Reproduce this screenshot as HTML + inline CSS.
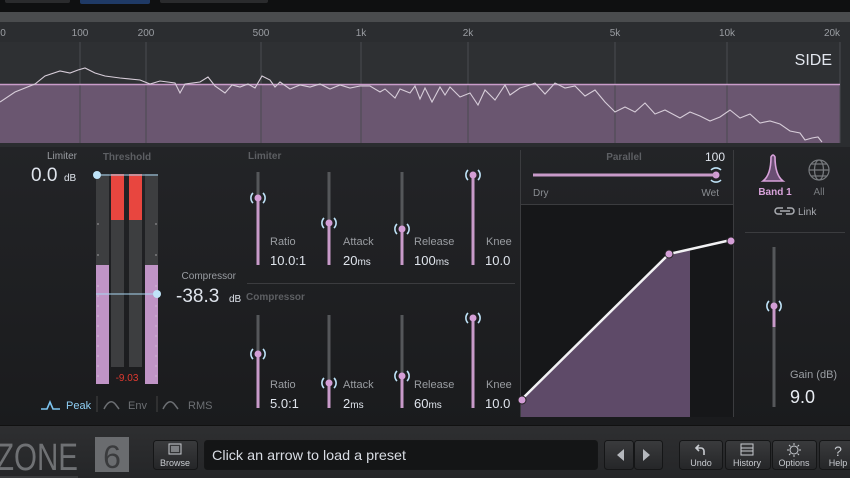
<!DOCTYPE html>
<html><head><meta charset="utf-8"><style>
body{margin:0;width:850px;height:478px;overflow:hidden;background:#1c1d1f;font-family:"Liberation Sans",sans-serif}
svg{display:block}
</style></head><body>
<svg width="850" height="478" viewBox="0 0 850 478" xmlns="http://www.w3.org/2000/svg" font-family="Liberation Sans, sans-serif">
<defs>
<linearGradient id="bg" x1="0" y1="0" x2="0" y2="1"><stop offset="0" stop-color="#232427"/><stop offset="1" stop-color="#1a1b1d"/></linearGradient>
<linearGradient id="ft" x1="0" y1="0" x2="0" y2="1"><stop offset="0" stop-color="#2e2f31"/><stop offset="1" stop-color="#252628"/></linearGradient>
<linearGradient id="btn" x1="0" y1="0" x2="0" y2="1"><stop offset="0" stop-color="#3a3b3d"/><stop offset="1" stop-color="#252628"/></linearGradient>
</defs>
<rect x="0" y="0" width="850" height="12" fill="#0f1011"/>
<rect x="5" y="-4" width="65" height="7" rx="2" fill="#2a2b2d"/>
<rect x="80" y="-4" width="70" height="8" rx="2" fill="#1f3a66"/>
<rect x="160" y="-4" width="108" height="7" rx="2" fill="#2a2b2d"/>
<rect x="0" y="12" width="850" height="10" fill="#4a4c4e"/>
<rect x="0" y="22" width="850" height="125" fill="#2b2d30"/>
<rect x="0" y="42" width="840" height="101" fill="#2e3033"/>
<g fill="#9a9da2" font-size="10" text-anchor="middle">
<text x="3" y="36">0</text><text x="80" y="36">100</text><text x="146" y="36">200</text><text x="261" y="36">500</text><text x="361" y="36">1k</text><text x="468" y="36">2k</text><text x="615" y="36">5k</text><text x="727" y="36">10k</text><text x="832" y="36">20k</text>
</g>
<rect x="0" y="84" width="840" height="59" fill="#6a5670"/>
<g stroke="#4a4b50" stroke-width="1"><line x1="80" y1="42" x2="80" y2="143"/><line x1="146" y1="42" x2="146" y2="143"/><line x1="261" y1="42" x2="261" y2="143"/><line x1="361" y1="42" x2="361" y2="143"/><line x1="468" y1="42" x2="468" y2="143"/><line x1="615" y1="42" x2="615" y2="143"/><line x1="727" y1="42" x2="727" y2="143"/><line x1="840" y1="42" x2="840" y2="143"/></g>
<line x1="0" y1="84.5" x2="840" y2="84.5" stroke="#c99cca" stroke-width="1.5"/>
<path d="M0,102 L15,92 L35,84 L45,76 L60,71 L70,73 L78,70 L85,68 L95,73 L105,76 L120,78 L140,80 L150,84 L160,81 L175,83 L180,93 L185,84 L200,82 L208,77 L215,86 L225,93 L232,85 L240,87 L248,84 L255,88 L262,76 L270,80 L275,87 L280,82 L290,89 L300,85 L310,87 L320,84 L330,89 L340,85 L350,88 L360,86 L370,86 L380,92 L385,89 L395,98 L400,89 L410,93 L415,86 L420,99 L425,88 L432,102 L440,87 L445,95 L450,87 L460,97 L470,93 L478,105 L485,90 L495,100 L505,85 L510,95 L520,88 L530,85 L535,83 L545,94 L555,83 L565,88 L575,86 L585,96 L595,90 L605,102 L615,112 L625,107 L635,112 L645,103 L655,114 L665,110 L680,118 L690,112 L700,116 L710,121 L720,117 L730,110 L740,118 L750,114 L760,123 L770,121 L780,124 L790,131 L800,133 L805,140 L812,138 L818,137 L822,142" fill="none" stroke="#d7cdd9" stroke-width="1.1"/>
<text x="832" y="65" font-size="16" fill="#e2e6ee" text-anchor="end">SIDE</text>
<rect x="0" y="147" width="850" height="278" fill="url(#bg)"/>
<text x="77" y="159" font-size="10" fill="#9a9da2" text-anchor="end">Limiter</text>
<text x="31" y="181" font-size="19" fill="#dfe4ec">0.0</text><text x="64" y="181" font-size="10" fill="#dfe4ec">dB</text>
<text x="127" y="160" font-size="10" fill="#5d5f63" font-weight="bold" text-anchor="middle">Threshold</text>
<rect x="96" y="174" width="13" height="210" fill="#3d3e40"/><rect x="145" y="174" width="13" height="210" fill="#3d3e40"/>
<rect x="111" y="174" width="13" height="193" fill="#3d3e40"/><rect x="129" y="174" width="13" height="193" fill="#3d3e40"/>
<rect x="111" y="174" width="13" height="46" fill="#e8463f"/><rect x="129" y="174" width="13" height="46" fill="#e8463f"/>
<rect x="96" y="265" width="13" height="119" fill="#c094c6"/><rect x="145" y="265" width="13" height="119" fill="#c094c6"/>
<g stroke="#d8d8dc" stroke-width="1" opacity="0.6">
<path d="M97,224h2M97,255h2M97,286h2M97,296h2M97,306h2M97,316h2M97,326h2M97,336h2M97,346h2M97,356h2M97,366h2M97,376h2"/>
<path d="M155,224h2M155,255h2M155,286h2M155,296h2M155,306h2M155,316h2M155,326h2M155,336h2M155,346h2M155,356h2M155,366h2M155,376h2"/>
</g>
<text x="127" y="381" font-size="10" fill="#e03a30" text-anchor="middle">-9.03</text>
<line x1="96" y1="175" x2="158" y2="175" stroke="#a9d6f2"/><circle cx="97" cy="175" r="4" fill="#bfe3f8"/>
<line x1="96" y1="294" x2="158" y2="294" stroke="#a9d6f2"/><circle cx="157" cy="294" r="4" fill="#bfe3f8"/>
<text x="236" y="279" font-size="10" fill="#9a9da2" text-anchor="end">Compressor</text>
<text x="176" y="302" font-size="19" fill="#dfe4ec">-38.3</text><text x="229" y="302" font-size="10" fill="#dfe4ec">dB</text>
<path d="M41,409 h6 l3,-7 l3,7 h7" fill="none" stroke="#7cc4f0" stroke-width="1.6"/><text x="66" y="409" font-size="11" fill="#8fd0f6">Peak</text>
<line x1="97" y1="396" x2="97" y2="412" stroke="#444"/>
<path d="M104,409 q6,-12 12,-4 l3,4" fill="none" stroke="#6c6f73" stroke-width="1.5"/><text x="128" y="409" font-size="11" fill="#6c6f73">Env</text>
<line x1="157" y1="396" x2="157" y2="412" stroke="#444"/>
<path d="M163,409 q6,-12 12,-4 l3,4" fill="none" stroke="#6c6f73" stroke-width="1.5"/><text x="188" y="409" font-size="11" fill="#6c6f73">RMS</text>
<text x="248" y="159" font-size="10" fill="#5d5f63" font-weight="bold">Limiter</text>
<line x1="247" y1="283.5" x2="515" y2="283.5" stroke="#3b3c3f"/>
<text x="246" y="300" font-size="10" fill="#5d5f63" font-weight="bold">Compressor</text>
<g stroke-width="3">
<line x1="258" y1="172" x2="258" y2="265" stroke="#55575a"/><line x1="258" y1="198" x2="258" y2="265" stroke="#c89ac9"/>
<line x1="329" y1="172" x2="329" y2="265" stroke="#55575a"/><line x1="329" y1="223" x2="329" y2="265" stroke="#c89ac9"/>
<line x1="402" y1="172" x2="402" y2="265" stroke="#55575a"/><line x1="402" y1="229" x2="402" y2="265" stroke="#c89ac9"/>
<line x1="473" y1="175" x2="473" y2="265" stroke="#c89ac9"/>
<line x1="258" y1="315" x2="258" y2="408" stroke="#55575a"/><line x1="258" y1="354" x2="258" y2="408" stroke="#c89ac9"/>
<line x1="329" y1="315" x2="329" y2="408" stroke="#55575a"/><line x1="329" y1="383" x2="329" y2="408" stroke="#c89ac9"/>
<line x1="402" y1="315" x2="402" y2="408" stroke="#55575a"/><line x1="402" y1="376" x2="402" y2="408" stroke="#c89ac9"/>
<line x1="473" y1="318" x2="473" y2="408" stroke="#c89ac9"/>
<line x1="774" y1="247" x2="774" y2="407" stroke="#55575a"/><line x1="774" y1="306" x2="774" y2="327" stroke="#c89ac9"/>
</g>
<g fill="#d39ed6" stroke="#bfe3f8" stroke-width="1.6">
<g transform="translate(258,198)"><circle r="3.5" stroke="none"/><path d="M-5,-5 a7,7 0 0 0 0,10 M5,-5 a7,7 0 0 1 0,10" fill="none"/></g>
<g transform="translate(329,223)"><circle r="3.5" stroke="none"/><path d="M-5,-5 a7,7 0 0 0 0,10 M5,-5 a7,7 0 0 1 0,10" fill="none"/></g>
<g transform="translate(402,229)"><circle r="3.5" stroke="none"/><path d="M-5,-5 a7,7 0 0 0 0,10 M5,-5 a7,7 0 0 1 0,10" fill="none"/></g>
<g transform="translate(473,175)"><circle r="3.5" stroke="none"/><path d="M-5,-5 a7,7 0 0 0 0,10 M5,-5 a7,7 0 0 1 0,10" fill="none"/></g>
<g transform="translate(258,354)"><circle r="3.5" stroke="none"/><path d="M-5,-5 a7,7 0 0 0 0,10 M5,-5 a7,7 0 0 1 0,10" fill="none"/></g>
<g transform="translate(329,383)"><circle r="3.5" stroke="none"/><path d="M-5,-5 a7,7 0 0 0 0,10 M5,-5 a7,7 0 0 1 0,10" fill="none"/></g>
<g transform="translate(402,376)"><circle r="3.5" stroke="none"/><path d="M-5,-5 a7,7 0 0 0 0,10 M5,-5 a7,7 0 0 1 0,10" fill="none"/></g>
<g transform="translate(473,318)"><circle r="3.5" stroke="none"/><path d="M-5,-5 a7,7 0 0 0 0,10 M5,-5 a7,7 0 0 1 0,10" fill="none"/></g>
<g transform="translate(774,306)"><circle r="3.5" stroke="none"/><path d="M-5,-5 a7,7 0 0 0 0,10 M5,-5 a7,7 0 0 1 0,10" fill="none"/></g>
<g transform="translate(716,175)"><circle r="3.5" stroke="none"/><path d="M-5,-5 a7,7 0 0 1 10,0 M-5,5 a7,7 0 0 0 10,0" fill="none"/></g>
</g>
<g font-size="11" fill="#9a9da2">
<text x="270" y="245">Ratio</text><text x="343" y="245">Attack</text><text x="414" y="245">Release</text><text x="486" y="245">Knee</text>
<text x="270" y="388">Ratio</text><text x="343" y="388">Attack</text><text x="414" y="388">Release</text><text x="486" y="388">Knee</text>
</g>
<g font-size="13" fill="#dfe4ec">
<text x="270" y="265">10.0:1</text><text x="343" y="265">20<tspan font-size="10">ms</tspan></text><text x="414" y="265">100<tspan font-size="10">ms</tspan></text><text x="485" y="265">10.0</text>
<text x="270" y="408">5.0:1</text><text x="343" y="408">2<tspan font-size="10">ms</tspan></text><text x="414" y="408">60<tspan font-size="10">ms</tspan></text><text x="485" y="408">10.0</text>
</g>
<line x1="520.5" y1="150" x2="520.5" y2="417" stroke="#3b3c3f"/>
<line x1="733.5" y1="150" x2="733.5" y2="417" stroke="#3b3c3f"/>
<text x="624" y="160" font-size="10" fill="#5d5f63" font-weight="bold" text-anchor="middle">Parallel</text>
<text x="725" y="161" font-size="12" fill="#dfe4ec" text-anchor="end">100</text>
<line x1="533" y1="175" x2="716" y2="175" stroke="#c89ac9" stroke-width="3"/>
<text x="533" y="196" font-size="10" fill="#8a8d92">Dry</text><text x="719" y="196" font-size="10" fill="#8a8d92" text-anchor="end">Wet</text>
<line x1="520" y1="204.5" x2="733" y2="204.5" stroke="#3b3c3f"/>
<rect x="521" y="205" width="212" height="212" fill="#161719"/>
<polygon points="521,400 669,254 690,249 690,417 521,417" fill="#5e4a68"/>
<polyline points="521,400 669,254 731,240" fill="none" stroke="#f2f2f4" stroke-width="2.5"/>
<g fill="#d39ed6" stroke="#222" stroke-width="1"><circle cx="522" cy="400" r="4"/><circle cx="669" cy="254" r="4"/><circle cx="731" cy="241" r="4"/></g>
<path d="M763,181 q8,-6 8,-24 q2,-4 4,0 q0,18 8,24 z" fill="#6a4e73" stroke="#d8a2da" stroke-width="1.6"/>
<text x="775" y="195" font-size="10" fill="#d8a2da" font-weight="bold" text-anchor="middle">Band 1</text>
<g fill="none" stroke="#777a7e" stroke-width="1.2"><circle cx="819" cy="170" r="10"/><ellipse cx="819" cy="170" rx="4.5" ry="10"/><line x1="809" y1="170" x2="829" y2="170"/><line x1="811" y1="164" x2="827" y2="164"/><line x1="811" y1="176" x2="827" y2="176"/></g>
<text x="819" y="195" font-size="10" fill="#777a7e" text-anchor="middle">All</text>
<path d="M783,208 h-5 a3,3 0 0 0 0,6 h4 M787,208 h4 a3,3 0 0 1 0,6 h-5 M780,211 h10" fill="none" stroke="#aaadb2" stroke-width="1.5"/>
<text x="798" y="215" font-size="10" fill="#aaadb2">Link</text>
<line x1="745" y1="232.5" x2="845" y2="232.5" stroke="#3b3c3f"/>
<text x="790" y="378" font-size="11" fill="#9a9da2">Gain (dB)</text>
<text x="790" y="403" font-size="18" fill="#e8ecf2">9.0</text>
<rect x="0" y="425" width="850" height="53" fill="url(#ft)"/>
<line x1="0" y1="425.5" x2="850" y2="425.5" stroke="#111"/>
<text x="-4" y="470" font-size="38" fill="#6f7174" textLength="82" lengthAdjust="spacingAndGlyphs" font-weight="300">ZONE</text>
<rect x="95" y="437" width="34" height="35" fill="#6a6c6f"/><text x="112" y="468" font-size="32" fill="#3a3b3d" text-anchor="middle">6</text>
<rect x="0" y="476" width="78" height="2" fill="#3a3b3d"/>
<g stroke="#151617"><rect x="153.5" y="440.5" width="44" height="29" rx="3" fill="url(#btn)"/>
<rect x="204.5" y="440.5" width="393" height="29" rx="3" fill="#141516"/>
<rect x="604.5" y="440.5" width="29" height="29" rx="3" fill="url(#btn)"/><rect x="634.5" y="440.5" width="28" height="29" rx="3" fill="url(#btn)"/>
<rect x="679.5" y="440.5" width="43" height="29" rx="3" fill="url(#btn)"/><rect x="725.5" y="440.5" width="45" height="29" rx="3" fill="url(#btn)"/><rect x="772.5" y="440.5" width="44" height="29" rx="3" fill="url(#btn)"/><rect x="819.5" y="440.5" width="40" height="29" rx="3" fill="url(#btn)"/></g>
<rect x="169" y="444" width="12" height="10" fill="none" stroke="#c8cbd0"/><path d="M171,447h8M171,449h8M171,451h8" stroke="#c8cbd0"/>
<text x="175" y="466" font-size="9" fill="#c8cbd0" text-anchor="middle">Browse</text>
<text x="212" y="460" font-size="14" fill="#d9dde4" textLength="194" lengthAdjust="spacingAndGlyphs">Click an arrow to load a preset</text>
<path d="M624,449 l-7,6 l7,6z M643,449 l7,6 l-7,6z" fill="#b5b8bd"/>
<path d="M704,455 v-4 a3,3 0 0 0 -3,-3 h-5 M699,445 l-3,3 l3,3" fill="none" stroke="#c8cbd0" stroke-width="1.6"/>
<text x="701" y="466" font-size="9" fill="#c8cbd0" text-anchor="middle">Undo</text>
<rect x="741" y="444" width="12" height="11" fill="none" stroke="#c8cbd0"/><path d="M741,448h12M741,451h12" stroke="#c8cbd0"/>
<text x="747" y="466" font-size="9" fill="#c8cbd0" text-anchor="middle">History</text>
<circle cx="794" cy="450" r="4" fill="none" stroke="#c8cbd0"/><path d="M794,443v2M794,455v2M787,450h2M799,450h2M789,445l1.5,1.5M797.5,453.5l1.5,1.5M799,445l-1.5,1.5M790.5,453.5l-1.5,1.5" stroke="#c8cbd0"/>
<text x="794" y="466" font-size="9" fill="#c8cbd0" text-anchor="middle">Options</text>
<text x="838" y="456" font-size="14" fill="#c8cbd0" text-anchor="middle">?</text>
<text x="838" y="466" font-size="9" fill="#c8cbd0" text-anchor="middle">Help</text>
</svg>
</body></html>
